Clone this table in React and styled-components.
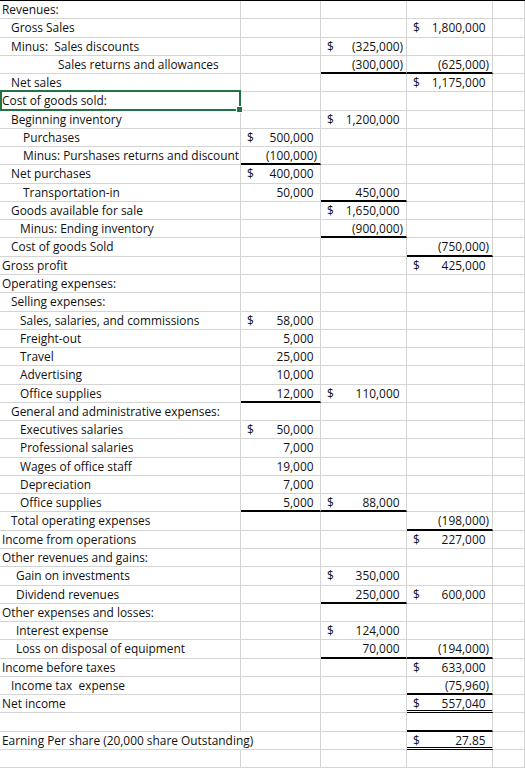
import React from 'react';
import styled, { createGlobalStyle } from 'styled-components';

const GlobalStyle = createGlobalStyle`
  html, body {
    margin: 0;
    padding: 0;
    background: #fff;
  }
  body {
    overflow: hidden;
  }
`;

const GRID = '#d4d4d4';
const GREEN = '#217346';

const Sheet = styled.div`
  width: 525px;
  border-top: 1px solid #000;
  font-family: "Open Sans", "Liberation Sans", sans-serif;
  font-size: 11.9px;
  color: #111;
`;

const Row = styled.div`
  display: grid;
  grid-template-columns: 241px 80px 86px 86px 1fr;
  height: 18.28px;
`;

const lineFor = line => {
  if (line === 2) return '3px double #000';
  if (line === 1) return '2px solid #000';
  return `1px solid ${GRID}`;
};

const Cell = styled.div`
  position: relative;
  box-sizing: border-box;
  min-width: 0;
  border-right: 1px solid ${p => (p.$spill ? 'transparent' : GRID)};
  border-bottom: ${p => lineFor(p.$line)};
  line-height: 16px;
  white-space: pre;
  overflow: ${p => (p.$spill || p.$open ? 'visible' : 'hidden')};
`;

const Label = styled(Cell)`
  padding-left: ${p => p.$x - 1}px;
`;

const Amount = styled(Cell)`
  display: flex;
  justify-content: space-between;
  padding: 0 3px 0 6px;
`;

const Paren = styled.span`
  visibility: hidden;
`;

const Selection = styled.div`
  position: absolute;
  top: -2px;
  left: 0;
  right: -1px;
  bottom: -1px;
  border: 2px solid ${GREEN};
  pointer-events: none;
  z-index: 2;
`;

const Handle = styled.div`
  position: absolute;
  right: -4px;
  bottom: -4px;
  width: 5px;
  height: 5px;
  background: ${GREEN};
  border: 1px solid #fff;
`;

const rows = [
  { label: 'Revenues:', x: 3 },
  { label: 'Gross Sales', x: 12, d: '$ 1,800,000' },
  { label: 'Minus:  Sales discounts', x: 12, c: '$ (325,000)' },
  { label: 'Sales returns and allowances', x: 59, c: '(300,000)', uc: 1, d: '(625,000)', ud: 1 },
  { label: 'Net sales', x: 12, d: '$ 1,175,000' },
  { label: 'Cost of goods sold:', x: 3, selected: true },
  { label: 'Beginning inventory', x: 12, c: '$ 1,200,000' },
  { label: 'Purchases', x: 24, b: '$ 500,000' },
  { label: 'Minus: Purshases returns and discount', x: 24, b: '(100,000)', ub: 1 },
  { label: 'Net purchases', x: 12, b: '$ 400,000' },
  { label: 'Transportation-in', x: 24, b: '50,000', c: '450,000', uc: 1 },
  { label: 'Goods available for sale', x: 12, c: '$ 1,650,000' },
  { label: 'Minus: Ending inventory', x: 21, c: '(900,000)', uc: 1 },
  { label: 'Cost of goods Sold', x: 12, d: '(750,000)', ud: 1 },
  { label: 'Gross profit', x: 3, d: '$ 425,000' },
  { label: 'Operating expenses:', x: 3 },
  { label: 'Selling expenses:', x: 12 },
  { label: 'Sales, salaries, and commissions', x: 21, b: '$ 58,000' },
  { label: 'Freight-out', x: 21, b: '5,000' },
  { label: 'Travel', x: 21, b: '25,000' },
  { label: 'Advertising', x: 21, b: '10,000' },
  { label: 'Office supplies', x: 21, b: '12,000', ub: 1, c: '$ 110,000' },
  { label: 'General and administrative expenses:', x: 12 },
  { label: 'Executives salaries', x: 21, b: '$ 50,000' },
  { label: 'Professional salaries', x: 21, b: '7,000' },
  { label: 'Wages of office staff', x: 21, b: '19,000' },
  { label: 'Depreciation', x: 21, b: '7,000' },
  { label: 'Office supplies', x: 21, b: '5,000', ub: 1, c: '$ 88,000', uc: 1 },
  { label: 'Total operating expenses', x: 12, d: '(198,000)', ud: 1 },
  { label: 'Income from operations', x: 3, d: '$ 227,000' },
  { label: 'Other revenues and gains:', x: 3 },
  { label: 'Gain on investments', x: 17, c: '$ 350,000' },
  { label: 'Dividend revenues', x: 17, c: '250,000', uc: 1, d: '$ 600,000' },
  { label: 'Other expenses and losses:', x: 3 },
  { label: 'Interest expense', x: 17, c: '$ 124,000' },
  { label: 'Loss on disposal of equipment', x: 17, c: '70,000', uc: 1, d: '(194,000)', ud: 1 },
  { label: 'Income before taxes', x: 3, d: '$ 633,000' },
  { label: 'Income tax  expense', x: 12, d: '(75,960)', ud: 1 },
  { label: 'Net income', x: 3, d: '$ 557,040', ud: 2 },
  { label: '', x: 3, ud: 1 },
  { label: 'Earning Per share (20,000 share Outstanding)', x: 3, spill: true, d: '$ 27.85', ud: 2 },
  { label: '', x: 3 },
];

// accounting format: "$" pinned left, figures right with room for ")"
const Money = ({ value, line }) => {
  if (!value) return <Amount $line={line} />;
  const dollar = value.startsWith('$ ');
  const figure = dollar ? value.slice(2) : value;
  const negative = figure.startsWith('(');
  return (
    <Amount $line={line}>
      <span>{dollar ? '$' : ''}</span>
      <span>
        {figure}
        {!negative && <Paren>)</Paren>}
      </span>
    </Amount>
  );
};

const App = () => (
  <>
    <GlobalStyle />
    <Sheet>
      {rows.map((r, i) => (
        <Row key={i}>
          <Label $x={r.x} $spill={r.spill} $open={r.selected}>
            {r.label}
            {r.selected && (
              <Selection>
                <Handle />
              </Selection>
            )}
          </Label>
          <Money value={r.b} line={r.ub} />
          <Money value={r.c} line={r.uc} />
          <Money value={r.d} line={r.ud} />
          <Cell />
        </Row>
      ))}
    </Sheet>
  </>
);

export default App;
